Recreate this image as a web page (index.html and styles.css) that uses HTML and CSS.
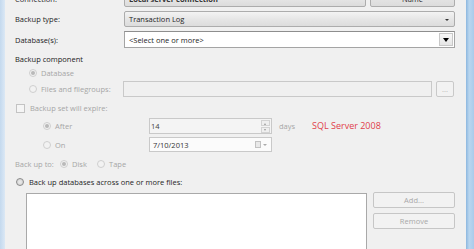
FILE: index.html
```html
<!DOCTYPE html>
<html>
<head>
<meta charset="utf-8">
<link rel="stylesheet" href="styles.css">
</head>
<body>
<div class="window">
  <div class="edge-left"></div>
  <div class="panel">
    <div class="row r-conn">
      <div class="label">Connection:</div>
      <div class="combo conn-combo"><span class="ctext">Local server connection</span></div>
      <div class="btn conn-btn">Name</div>
    </div>
    <div class="row r-type">
      <div class="label">Backup type:</div>
      <div class="combo wide"><span class="ctext">Transaction Log</span><span class="arrow-sm"></span></div>
    </div>
    <div class="row r-db">
      <div class="label">Database(s):</div>
      <div class="dbbox"><span class="ctext">&lt;Select one or more&gt;</span><span class="dbarrow"><span class="arrow-lg"></span></span></div>
    </div>
    <div class="row r-comp">
      <div class="label strong">Backup component</div>
    </div>
    <div class="row r-dbradio">
      <span class="radio dis checked"></span><span class="dis-text">Database</span>
    </div>
    <div class="row r-files">
      <span class="radio dis"></span><span class="dis-text files-label">Files and filegroups:</span>
      <div class="field files-field"></div>
      <div class="dots">...</div>
    </div>
    <div class="row r-expire">
      <span class="check"></span><span class="dis-text">Backup set will expire:</span>
    </div>
    <div class="row r-after">
      <span class="radio dis checked"></span><span class="dis-text after-label">After</span>
      <div class="field num-field"><span class="ftext">14</span><span class="spin"><span class="sp-up"></span><span class="sp-dn"></span></span></div>
      <span class="dis-text days">days</span>
      <span class="sql">SQL Server 2008</span>
    </div>
    <div class="row r-on">
      <span class="radio dis"></span><span class="dis-text on-label">On</span>
      <div class="field date-field"><span class="ftext">7/10/2013</span><span class="cal"></span><span class="cal-arrow"></span></div>
    </div>
    <div class="row r-to">
      <span class="dis-text to-label">Back up to:</span>
      <span class="radio dis checked"></span><span class="dis-text disk">Disk</span>
      <span class="radio dis"></span><span class="dis-text">Tape</span>
    </div>
    <div class="row r-across">
      <span class="radio en"></span><span class="across">Back up databases across one or more files:</span>
    </div>
    <div class="files-area">
      <div class="listbox"></div>
      <div class="side-btns">
        <div class="btn dbtn">Add...</div>
        <div class="btn dbtn">Remove</div>
      </div>
    </div>
  </div>
  <div class="edge-right"></div>
</div>
</body>
</html>
```
FILE: styles.css
```css
html, body {
  margin: 0;
  padding: 0;
  width: 474px;
  height: 249px;
  overflow: hidden;
  background: #f0f0f0;
}
body {
  font-family: "Open Sans", "Noto Sans", sans-serif;
  font-size: 7.5px;
  color: #1e1e1e;
}
.window {
  display: flex;
  height: 249px;
}
.edge-left {
  width: 5px;
  background: linear-gradient(to right, #c4d9ee, #dbe8f5);
}
.edge-right {
  width: 8px;
  background: linear-gradient(to right, #8cb7df, #b9d6ef 40%, #a9cbea);
}
.panel {
  flex: 1;
  padding: 0 11px 0 10px;
  display: flex;
  flex-direction: column;
}
.row {
  display: flex;
  align-items: center;
  flex: none;
}
.label {
  width: 109px;
  flex: none;
  white-space: nowrap;
}
.strong { color: #222; }
.r-conn { height: 17px; margin-top: -10px; }
.r-type { height: 16px; margin-top: 4px; }
.r-db { height: 17px; margin-top: 4px; }
.r-comp { height: 12px; margin-top: 5px; }
.r-dbradio { height: 14px; margin-top: 1px; padding-left: 14px; }
.r-files { height: 16px; margin-top: 1px; padding-left: 14px; }
.r-expire { height: 14px; margin-top: 4px; padding-left: 1px; }
.r-after { height: 16px; margin-top: 3px; padding-left: 28px; }
.r-on { height: 15px; margin-top: 3px; padding-left: 28px; }
.r-to { height: 12px; margin-top: 6px; }
.r-across { height: 12px; margin-top: 6px; padding-left: 1px; }

.combo {
  box-sizing: border-box;
  height: 100%;
  border: 1px solid #acacac;
  border-radius: 2px;
  background: linear-gradient(#f3f3f3, #e6e6e6 50%, #dcdcdc);
  display: flex;
  align-items: center;
  padding-left: 4px;
  position: relative;
}
.conn-combo { width: 242px; }
.conn-combo .ctext { color: #333; font-weight: bold; }
.wide { width: 331px; }
.ctext { white-space: nowrap; }
.arrow-sm {
  position: absolute;
  right: 5px;
  top: 7px;
  border-left: 2px solid transparent;
  border-right: 2px solid transparent;
  border-top: 2px solid #333;
}
.btn {
  box-sizing: border-box;
  border: 1px solid #adadad;
  border-radius: 2px;
  background: linear-gradient(#f4f4f4, #e4e4e4 50%, #dcdcdc);
  display: flex;
  align-items: center;
  justify-content: center;
}
.conn-btn { width: 85px; height: 100%; margin-left: 4px; }
.dbbox {
  box-sizing: border-box;
  width: 331px;
  height: 100%;
  border: 1px solid #a4a4a4;
  border-top-color: #8e8e8e;
  background: #fff;
  display: flex;
  align-items: center;
  padding-left: 4px;
}
.dbbox .ctext { flex: 1; }
.dbarrow {
  width: 14px;
  height: 13px;
  margin-right: 1px;
  border: 1px solid #c8c8c8;
  box-sizing: border-box;
  background: linear-gradient(#f7f7f7, #e6e6e6);
  display: flex;
  align-items: center;
  justify-content: center;
}
.arrow-lg {
  border-left: 3.5px solid transparent;
  border-right: 3.5px solid transparent;
  border-top: 4px solid #000;
}
.radio {
  box-sizing: border-box;
  width: 8px;
  height: 8px;
  border-radius: 50%;
  flex: none;
  position: relative;
}
.radio.dis {
  border: 1px solid #cfcfcf;
  background: #f2f2f2;
}
.radio.checked::after {
  content: "";
  position: absolute;
  left: 1px;
  top: 1px;
  width: 4px;
  height: 4px;
  border-radius: 50%;
  background: #b9b9b9;
}
.radio.en {
  border: 1px solid #8a8a8a;
  background: radial-gradient(circle at 50% 50%, #ececec, #cfcfcf);
}
.dis-text { color: #a6a6a6; white-space: nowrap; margin-left: 4px; }
.files-label { width: 80px; flex: none; }
.field {
  box-sizing: border-box;
  border: 1px solid #c9c9c9;
  height: 100%;
  display: flex;
  align-items: center;
  position: relative;
}
.files-field {
  width: 309px;
  background: #f0f0f0;
  margin-left: 2px;
}
.dots {
  box-sizing: border-box;
  width: 18px;
  height: 100%;
  margin-left: 4px;
  border: 1px solid #c9c9c9;
  border-radius: 2px;
  background: #f2f2f2;
  color: #b5b5b5;
  display: flex;
  align-items: center;
  justify-content: center;
}
.check {
  box-sizing: border-box;
  width: 9px;
  height: 9px;
  border: 1px solid #c3c3c3;
  background: #f5f5f5;
  flex: none;
  margin-right: 1px;
}
.after-label { width: 94px; flex: none; }
.on-label { width: 94px; flex: none; }
.num-field {
  width: 123px;
  background: #f4f4f4;
  color: #444;
}
.date-field {
  width: 123px;
  background: #fbfbfb;
  color: #333;
}
.ftext { margin-left: 3px; flex: 1; }
.num-field .ftext { margin-left: 1px; }
.spin {
  width: 9px;
  height: 13px;
  margin-right: 1px;
  display: flex;
  flex-direction: column;
  gap: 1px;
}
.sp-up, .sp-dn {
  flex: 1;
  border: 1px solid #d3d3d3;
  background: #efefef;
  position: relative;
}
.sp-up::after, .sp-dn::after {
  content: "";
  position: absolute;
  left: 2px;
  top: 2px;
  border-left: 1.5px solid transparent;
  border-right: 1.5px solid transparent;
}
.sp-up::after { border-bottom: 2px solid #999; }
.sp-dn::after { border-top: 2px solid #999; top: 1px; }
.cal {
  width: 6px;
  height: 7px;
  border: 1px solid #c2c2c2;
  background: #e9e9e9;
  box-sizing: border-box;
  margin-right: 2px;
}
.cal-arrow {
  border-left: 2px solid transparent;
  border-right: 2px solid transparent;
  border-top: 2px solid #aaa;
  margin-right: 4px;
}
.days { margin-left: 7px; width: 26px; flex: none; }
.sql {
  color: #e0404a;
  font-size: 9px;
  margin-left: 7px;
  margin-top: -1px;
  white-space: nowrap;
}
.to-label { margin-left: 0; width: 45px; flex: none; }
.disk { width: 25px; flex: none; }
.across { margin-left: 5px; white-space: nowrap; }
.files-area {
  display: flex;
  margin-top: 4px;
  flex: 1;
  padding-left: 11px;
}
.listbox {
  width: 341px;
  margin-top: 1px;
  border: 1px solid #a9a9a9;
  border-bottom: none;
  background: #fff;
  box-sizing: border-box;
}
.side-btns {
  display: flex;
  flex-direction: column;
  gap: 5px;
  margin-left: 6px;
}
.dbtn {
  width: 82px;
  height: 16px;
  color: #a8a8a8;
  border-color: #c6c6c6;
  background: #f2f2f2;
}
```
